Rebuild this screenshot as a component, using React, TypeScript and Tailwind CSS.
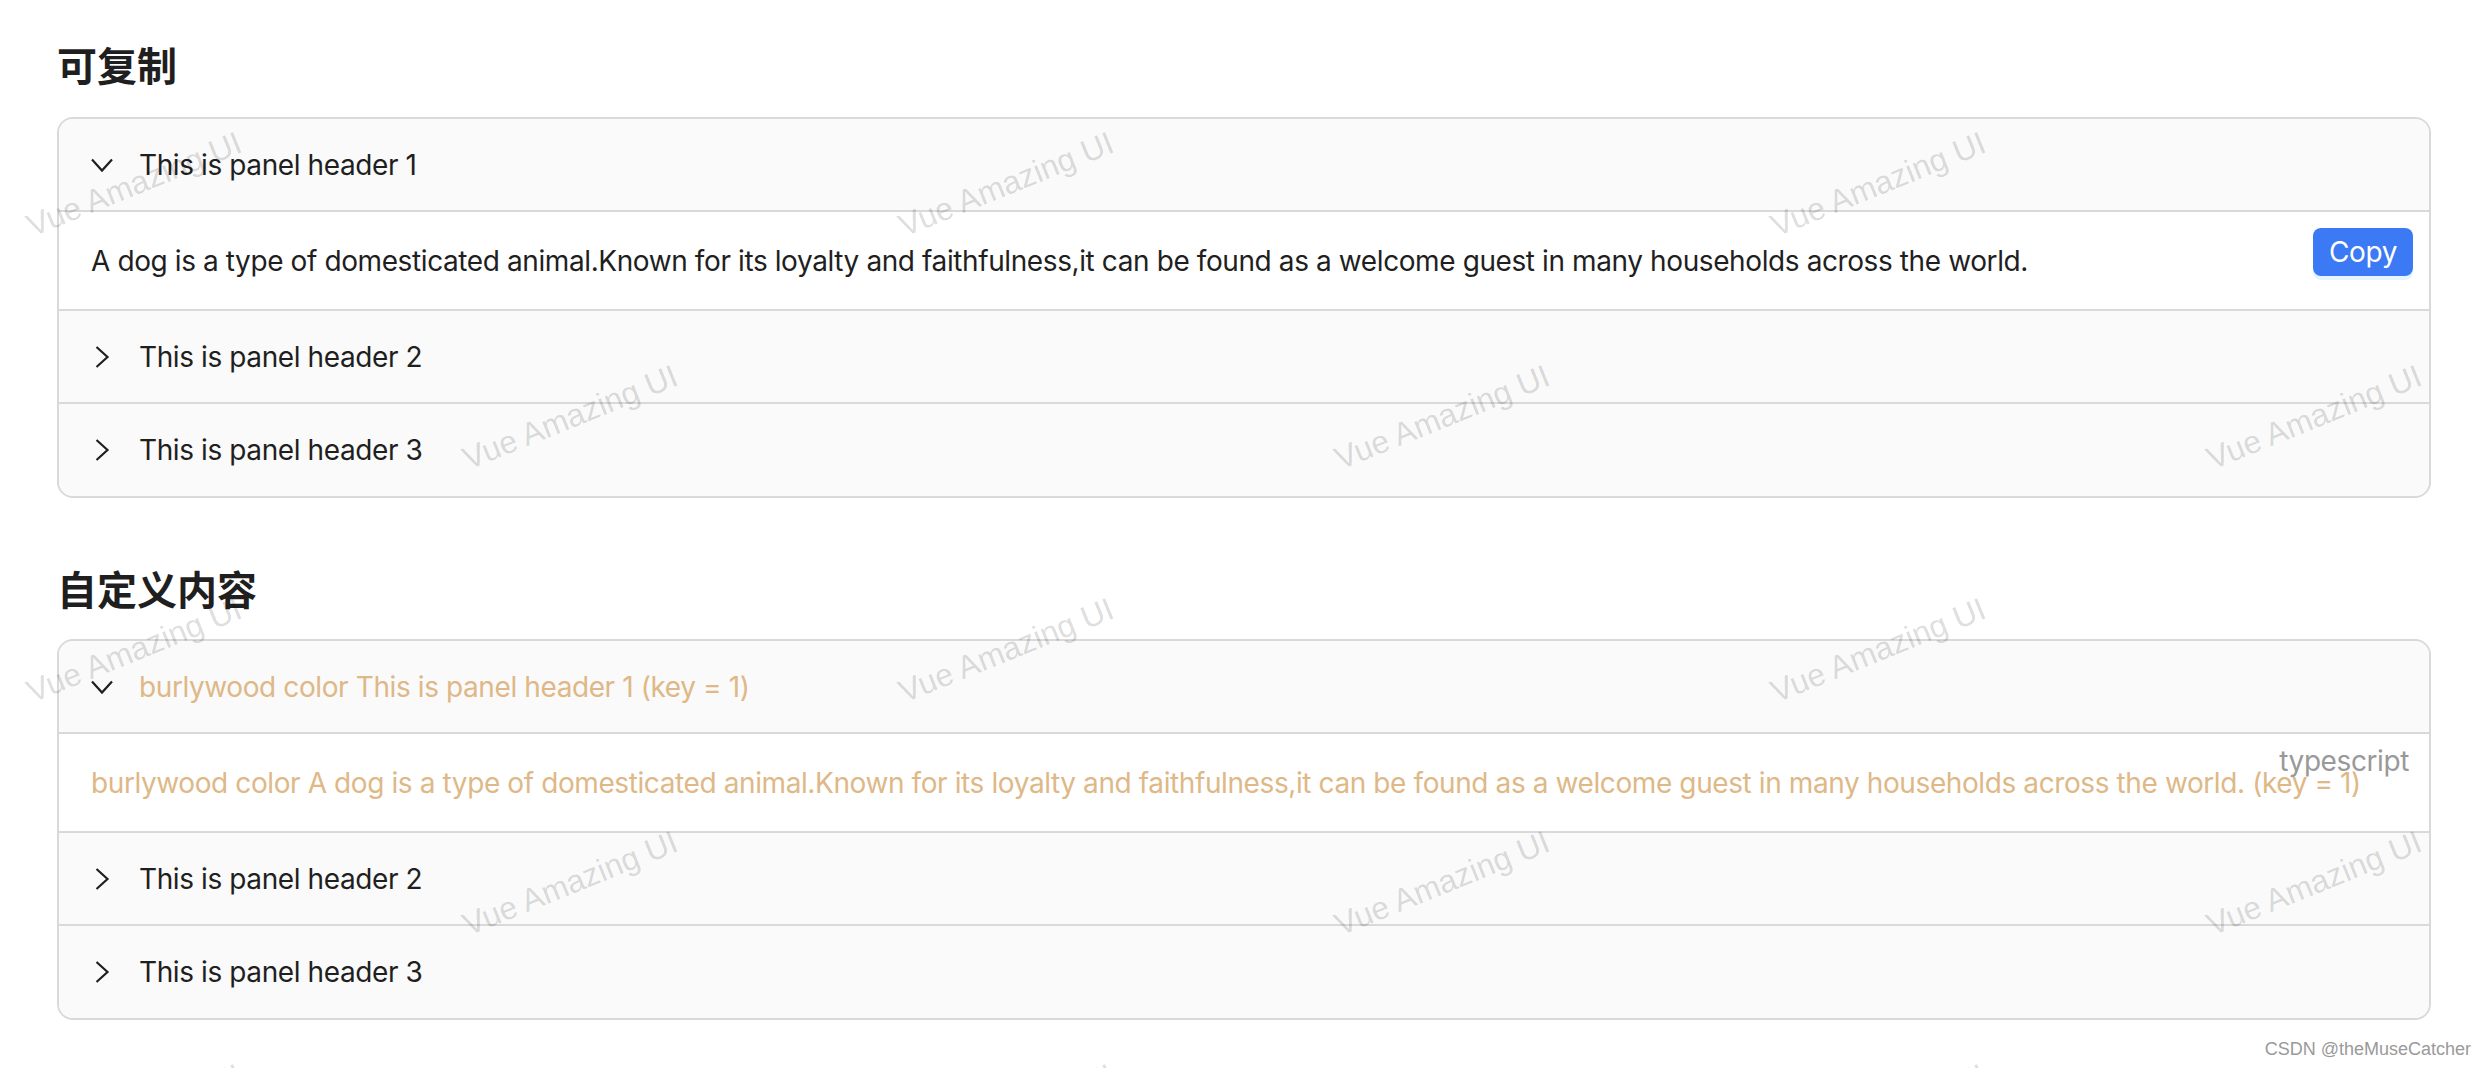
import React from "react";

const FONT = { fontFamily: "Inter, 'Noto Sans CJK SC', sans-serif" };

function Chevron({ down }: { down?: boolean }) {
  return (
    <svg
      width="24"
      height="24"
      viewBox="0 0 24 24"
      fill="none"
      stroke="#1f1f1f"
      strokeWidth="2.2"
      className={down ? "rotate-90 shrink-0" : "shrink-0"}
    >
      <polyline points="6.5,2 17.5,12 6.5,22" />
    </svg>
  );
}

function Header({
  text,
  open,
  last,
  color,
}: {
  text: string;
  open?: boolean;
  last?: boolean;
  color?: string;
}) {
  return (
    <div
      className={
        "flex items-center pl-[31px] bg-[#fafafa] " +
        (last ? "h-[92px]" : "h-[93px] border-b-2 border-[#d9d9d9]")
      }
    >
      <Chevron down={open} />
      <span
        className={
          "ml-[25px] text-[28px] leading-[34px] tracking-[-0.4px] whitespace-nowrap " +
          (color === "burly" ? "text-[#deb887]" : "text-[#1f1f1f]")
        }
      >
        {text}
      </span>
    </div>
  );
}

const DOG =
  "A dog is a type of domesticated animal.Known for its loyalty and faithfulness,it can be found as a welcome guest in many households across the world.";

function Watermarks() {
  const marks: { x: number; y: number }[] = [];
  for (let k = 0; k < 6; k++) {
    const y = -49 + 233 * k;
    const base = k % 2 === 0 ? -302 : 134;
    for (let j = 0; j < 5; j++) {
      marks.push({ x: base + 872 * j, y });
    }
  }
  return (
    <div className="pointer-events-none absolute inset-0 overflow-hidden z-10">
      {marks.map((m, i) => (
        <span
          key={i}
          className="absolute -translate-x-1/2 -translate-y-1/2 -rotate-[22deg] whitespace-nowrap text-[32px] leading-[36px] text-[rgba(0,0,0,0.15)]"
          style={{ left: m.x, top: m.y, fontFamily: "'Liberation Sans', Arial, sans-serif" }}
        >
          Vue Amazing UI
        </span>
      ))}
    </div>
  );
}

export default function App() {
  return (
    <div className="relative w-full min-h-[1068px] bg-white overflow-hidden" style={FONT}>
      <Watermarks />
      <div className="pt-[44px] pl-[57px] pr-[55px]">
        <h2
          className="text-[40px] leading-[40px] font-bold text-[#1f1f1f]"
          style={{ fontFamily: "'Noto Sans CJK SC', sans-serif" }}
        >
          可复制
        </h2>
        <div className="mt-[33px] rounded-[16px] border-2 border-[#d9d9d9] overflow-hidden bg-[#fafafa]">
          <Header text="This is panel header 1" open />
          <div className="flex items-center justify-between h-[99px] pl-[32px] pr-[16px] bg-white border-b-2 border-[#d9d9d9]">
            <span className="text-[28px] leading-[34px] tracking-[-0.4px] text-[#1f1f1f] whitespace-nowrap">
              {DOG}
            </span>
            <button className="self-start mt-[16px] h-[48px] px-[16px] rounded-[8px] bg-[#3b79f5] text-white text-[28px] leading-[34px] tracking-[-0.4px] shadow-[0_4px_0_rgba(5,145,255,0.1)]">
              Copy
            </button>
          </div>
          <Header text="This is panel header 2" />
          <Header text="This is panel header 3" last />
        </div>

        <h2
          className="mt-[70px] text-[40px] leading-[40px] font-bold text-[#1f1f1f]"
          style={{ fontFamily: "'Noto Sans CJK SC', sans-serif" }}
        >
          自定义内容
        </h2>
        <div className="mt-[31px] rounded-[16px] border-2 border-[#d9d9d9] overflow-hidden bg-[#fafafa]">
          <Header text="burlywood color This is panel header 1 (key = 1)" open color="burly" />
          <div className="relative flex items-center h-[99px] pl-[32px] bg-white border-b-2 border-[#d9d9d9]">
            <span className="text-[28px] leading-[34px] tracking-[-0.4px] text-[#deb887] whitespace-nowrap">
              burlywood color {DOG} (key = 1)
            </span>
            <span className="absolute top-[10px] right-[20px] text-[28px] leading-[34px] tracking-[-0.4px] text-[#999999]">
              typescript
            </span>
          </div>
          <Header text="This is panel header 2" />
          <Header text="This is panel header 3" last />
        </div>
      </div>
      <div
        className="absolute right-[15px] top-[1038px] text-[18px] leading-[22px] text-[#9a9a9a] [text-shadow:0_0_2px_#fff]"
        style={{ fontFamily: "'Liberation Sans', Arial, sans-serif" }}
      >
        CSDN @theMuseCatcher
      </div>
    </div>
  );
}
